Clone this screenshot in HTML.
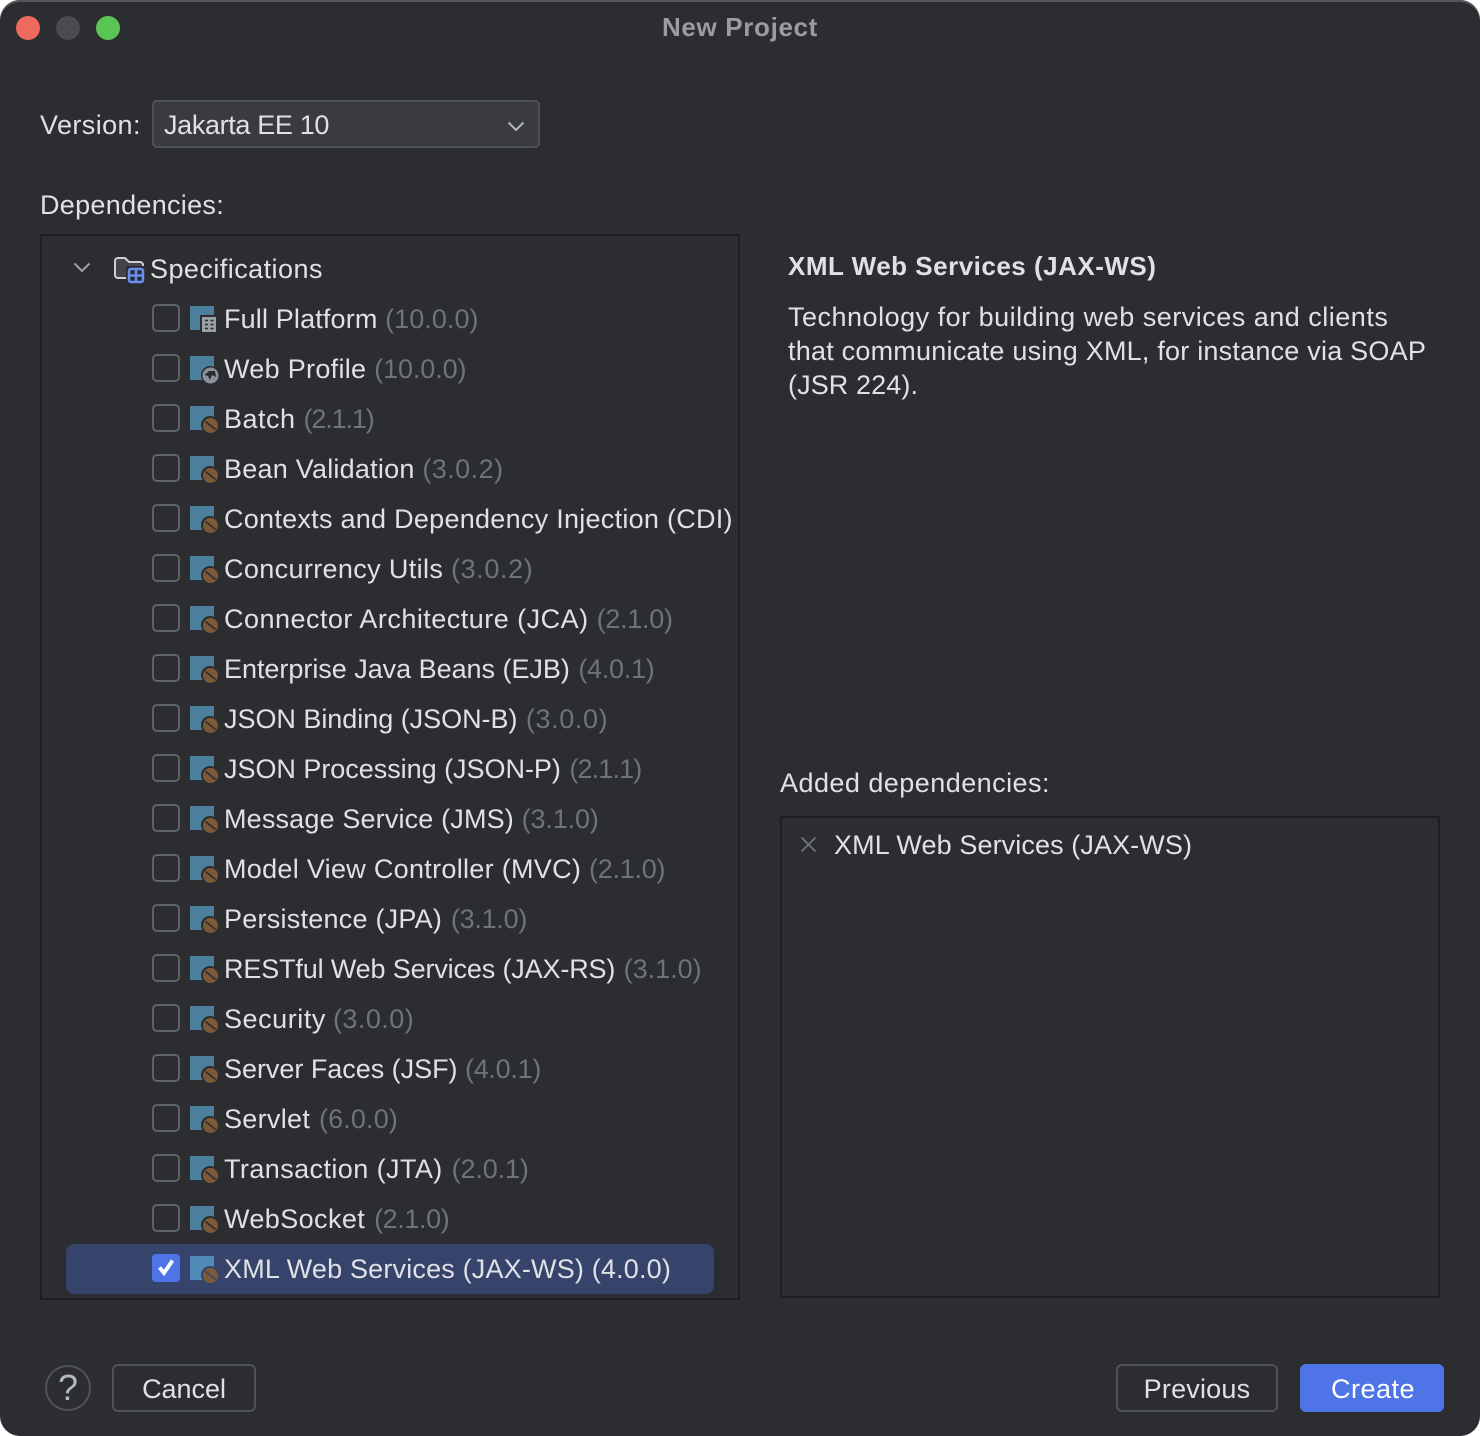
<!DOCTYPE html>
<html><head><meta charset="utf-8"><style>
html,body{margin:0;padding:0;background:#fff}
body{width:1480px;height:1436px;overflow:hidden;position:relative;font-family:"Liberation Sans",sans-serif}
#w{position:absolute;left:0;top:0;width:1480px;height:1436px;background:#2b2d30;border-radius:20px;box-shadow:inset 0 2px 0 #55565a;overflow:hidden;color:#dfe1e5;font-size:27px}
.t{position:absolute;white-space:nowrap;line-height:34px;letter-spacing:.3px}
.g{color:#6f737a}
.a{position:absolute}
.box{position:absolute;box-sizing:border-box;border:2px solid #1e1f22}
.cb{position:absolute;left:152px;width:28px;height:28px;box-sizing:border-box;border:2px solid #5f6268;border-radius:5px}
.i{position:absolute;left:190px;width:24px;height:24px;background:#4c7f9c}
.ov{position:absolute;left:201px;width:18px;height:18px}
.r{left:224px}
.btn{position:absolute;top:1364px;height:48px;box-sizing:border-box;border:2px solid #4e5157;border-radius:6px;text-align:center;line-height:46px;letter-spacing:.3px}
</style></head><body><div id="w">
<svg width="0" height="0" style="position:absolute"><defs>
<symbol id="bean" viewBox="0 0 18 18"><circle cx="9" cy="9" r="9" fill="#2b2d30"/><circle cx="9.500" cy="9.500" r="7.500" fill="#7d5a36"/><path d="M4.500 5.500L14.500 13.500" stroke="#2b2d30" stroke-width="1.600"/></symbol>
<symbol id="beans" viewBox="0 0 18 18"><circle cx="9" cy="9" r="9" fill="#36436b"/><circle cx="9.500" cy="9.500" r="7.500" fill="#7d5a36"/><path d="M4.500 5.500L14.500 13.500" stroke="#36436b" stroke-width="1.600"/></symbol>
</defs></svg>

<div class="a" style="left:16px;top:16px;width:24px;height:24px;border-radius:50%;background:#ee695e"></div>
<div class="a" style="left:56px;top:16px;width:24px;height:24px;border-radius:50%;background:#4a4b4e"></div>
<div class="a" style="left:96px;top:16px;width:24px;height:24px;border-radius:50%;background:#5ac455"></div>
<div class="t" style="left:0;width:1480px;text-align:center;top:10px;font-weight:bold;font-size:26px;color:#9a9ca1;letter-spacing:.65px">New Project</div>

<div class="t" style="left:40px;top:108px;letter-spacing:.42px">Version:</div>
<div class="a" style="left:152px;top:100px;width:388px;height:48px;box-sizing:border-box;background:#393b40;border:2px solid #4e5157;border-radius:5px"></div>
<div class="t" style="left:164px;top:108px;letter-spacing:-.35px">Jakarta EE 10</div>
<svg class="a" style="left:506px;top:120px" width="20" height="14" viewBox="0 0 20 14"><path d="M2.500 2.500L10 10L17.500 2.500" fill="none" stroke="#b4b8bf" stroke-width="2"/></svg>

<div class="t" style="left:40px;top:188px">Dependencies:</div>
<div class="box" style="left:40px;top:234px;width:700px;height:1066px"></div>

<svg class="a" style="left:72px;top:261px" width="20" height="14" viewBox="0 0 20 14"><path d="M2.500 2.500L10 10L17.500 2.500" fill="none" stroke="#9da0a8" stroke-width="2"/></svg>
<svg class="a" style="left:112px;top:254px" width="36" height="32" viewBox="0 0 36 32"><path d="M3 7a3 3 0 0 1 3-3h7l4 4h11a3 3 0 0 1 3 3v13H6a3 3 0 0 1-3-3z" fill="#43454a" stroke="#ced0d6" stroke-width="2"/><rect x="14" y="12" width="20" height="20" fill="#2b2d30"/><rect x="17" y="15" width="14" height="13" rx="2" fill="#2b2d30" stroke="#6b8fef" stroke-width="2.500"/><path d="M24 15v13M17 21.500h14" stroke="#6b8fef" stroke-width="2.500"/></svg>
<div class="t" style="left:150px;top:252px;letter-spacing:.45px">Specifications</div>

<div class="cb" style="top:304px"></div><div class="i" style="top:306px"></div>
<svg class="ov" style="left:200px;top:315px" viewBox="0 0 18 18"><rect width="18" height="18" fill="#2b2d30"/><rect x="2" y="2" width="14" height="15" fill="#9aa0a8"/><path d="M5 5.500h3M5 9.500h3M5 13.500h3M10.500 5.500h3M10.500 9.500h3M10.500 13.500h3" stroke="#2b2d30" stroke-width="1.600"/></svg>
<div class="t r" style="top:302px;letter-spacing:.15px">Full Platform <span class="g" style="letter-spacing:.05px">(10.0.0)</span></div>

<div class="cb" style="top:354px"></div><div class="i" style="top:356px"></div>
<svg class="ov" style="top:366px" viewBox="0 0 18 18"><circle cx="9" cy="9" r="9" fill="#2b2d30"/><circle cx="9.500" cy="9.500" r="8" fill="#8a929c"/><path d="M3.500 9L8 5L14 5L15 11L11 9L9 14L7 10z" fill="#2b2d30"/></svg>
<div class="t r" style="top:352px">Web Profile <span class="g" style="letter-spacing:-.1px">(10.0.0)</span></div>

<div class="cb" style="top:404px"></div><div class="i" style="top:406px"></div><svg class="ov" style="top:416px"><use href="#bean"/></svg>
<div class="t r" style="top:402px;letter-spacing:.5px">Batch <span class="g" style="letter-spacing:-1.15px">(2.1.1)</span></div>
<div class="cb" style="top:454px"></div><div class="i" style="top:456px"></div><svg class="ov" style="top:466px"><use href="#bean"/></svg>
<div class="t r" style="top:452px;letter-spacing:.23px">Bean Validation <span class="g" style="letter-spacing:.45px">(3.0.2)</span></div>
<div class="cb" style="top:504px"></div><div class="i" style="top:506px"></div><svg class="ov" style="top:516px"><use href="#bean"/></svg>
<div class="t r" style="top:502px;letter-spacing:.27px">Contexts and Dependency Injection (CDI)</div>
<div class="cb" style="top:554px"></div><div class="i" style="top:556px"></div><svg class="ov" style="top:566px"><use href="#bean"/></svg>
<div class="t r" style="top:552px;letter-spacing:.36px">Concurrency Utils <span class="g" style="letter-spacing:.6px">(3.0.2)</span></div>
<div class="cb" style="top:604px"></div><div class="i" style="top:606px"></div><svg class="ov" style="top:616px"><use href="#bean"/></svg>
<div class="t r" style="top:602px;letter-spacing:.48px">Connector Architecture (JCA) <span class="g" style="letter-spacing:-.27px">(2.1.0)</span></div>
<div class="cb" style="top:654px"></div><div class="i" style="top:656px"></div><svg class="ov" style="top:666px"><use href="#bean"/></svg>
<div class="t r" style="top:652px;letter-spacing:-.03px">Enterprise Java Beans (EJB) <span class="g" style="letter-spacing:-.27px;margin-left:1px">(4.0.1)</span></div>
<div class="cb" style="top:704px"></div><div class="i" style="top:706px"></div><svg class="ov" style="top:716px"><use href="#bean"/></svg>
<div class="t r" style="top:702px;letter-spacing:-.03px">JSON Binding (JSON-B) <span class="g" style="letter-spacing:.6px;margin-left:1px">(3.0.0)</span></div>
<div class="cb" style="top:754px"></div><div class="i" style="top:756px"></div><svg class="ov" style="top:766px"><use href="#bean"/></svg>
<div class="t r" style="top:752px;letter-spacing:-.03px">JSON Processing (JSON-P) <span class="g" style="letter-spacing:-.85px;margin-left:1px">(2.1.1)</span></div>
<div class="cb" style="top:804px"></div><div class="i" style="top:806px"></div><svg class="ov" style="top:816px"><use href="#bean"/></svg>
<div class="t r" style="top:802px;letter-spacing:.16px">Message Service (JMS) <span class="g" style="letter-spacing:-.13px">(3.1.0)</span></div>
<div class="cb" style="top:854px"></div><div class="i" style="top:856px"></div><svg class="ov" style="top:866px"><use href="#bean"/></svg>
<div class="t r" style="top:852px">Model View Controller (MVC) <span class="g" style="letter-spacing:-.27px">(2.1.0)</span></div>
<div class="cb" style="top:904px"></div><div class="i" style="top:906px"></div><svg class="ov" style="top:916px"><use href="#bean"/></svg>
<div class="t r" style="top:902px;letter-spacing:.24px">Persistence (JPA) <span class="g" style="letter-spacing:-.27px;margin-left:1px">(3.1.0)</span></div>
<div class="cb" style="top:954px"></div><div class="i" style="top:956px"></div><svg class="ov" style="top:966px"><use href="#bean"/></svg>
<div class="t r" style="top:952px;letter-spacing:-.15px">RESTful Web Services (JAX-RS) <span class="g" style="letter-spacing:0;margin-left:1px">(3.1.0)</span></div>
<div class="cb" style="top:1004px"></div><div class="i" style="top:1006px"></div><svg class="ov" style="top:1016px"><use href="#bean"/></svg>
<div class="t r" style="top:1002px;letter-spacing:.55px">Security <span class="g" style="letter-spacing:.45px;margin-left:-1px">(3.0.0)</span></div>
<div class="cb" style="top:1054px"></div><div class="i" style="top:1056px"></div><svg class="ov" style="top:1066px"><use href="#bean"/></svg>
<div class="t r" style="top:1052px;letter-spacing:-.03px">Server Faces (JSF) <span class="g" style="letter-spacing:-.27px">(4.0.1)</span></div>
<div class="cb" style="top:1104px"></div><div class="i" style="top:1106px"></div><svg class="ov" style="top:1116px"><use href="#bean"/></svg>
<div class="t r" style="top:1102px">Servlet <span class="g" style="letter-spacing:.15px;margin-left:1px">(6.0.0)</span></div>
<div class="cb" style="top:1154px"></div><div class="i" style="top:1156px"></div><svg class="ov" style="top:1166px"><use href="#bean"/></svg>
<div class="t r" style="top:1152px;letter-spacing:.42px">Transaction (JTA) <span class="g" style="letter-spacing:-.13px;margin-left:1px">(2.0.1)</span></div>
<div class="cb" style="top:1204px"></div><div class="i" style="top:1206px"></div><svg class="ov" style="top:1216px"><use href="#bean"/></svg>
<div class="t r" style="top:1202px;letter-spacing:.4px">WebSocket <span class="g" style="letter-spacing:-.4px;margin-left:1px">(2.1.0)</span></div>

<div class="a" style="left:66px;top:1244px;width:648px;height:50px;background:#36436b;border-radius:8px"></div>
<div class="a" style="left:152px;top:1254px;width:28px;height:28px;background:#4e74e8;border-radius:4px"></div>
<svg class="a" style="left:152px;top:1254px" width="28" height="28" viewBox="0 0 28 28"><path d="M7.500 13.500L12 19L20.500 6.500" fill="none" stroke="#fff" stroke-width="3.800"/></svg>
<div class="i" style="top:1256px;background:#5089b5"></div><svg class="ov" style="top:1266px"><use href="#beans"/></svg>
<div class="t r" style="top:1252px;letter-spacing:.18px">XML Web Services (JAX-WS) (4.0.0)</div>

<div class="t" style="left:788px;top:249px;font-weight:bold;font-size:26px;letter-spacing:.5px">XML Web Services (JAX-WS)</div>
<div class="t" style="left:788px;top:300px;letter-spacing:.5px">Technology for building web services and clients</div>
<div class="t" style="left:788px;top:334px;letter-spacing:.22px">that communicate using XML, for instance via SOAP</div>
<div class="t" style="left:788px;top:368px;letter-spacing:.1px">(JSR 224).</div>

<div class="t" style="left:780px;top:766px;letter-spacing:.46px">Added dependencies:</div>
<div class="box" style="left:780px;top:816px;width:660px;height:482px"></div>
<svg class="a" style="left:800px;top:836px" width="17" height="17" viewBox="0 0 17 17"><path d="M1.500 1.500L15.500 15.500M15.500 1.500L1.500 15.500" stroke="#6f737a" stroke-width="1.800"/></svg>
<div class="t" style="left:834px;top:828px;letter-spacing:.1px">XML Web Services (JAX-WS)</div>

<svg class="a" style="left:45px;top:1365px" width="46" height="46" viewBox="0 0 46 46"><circle cx="23" cy="23" r="22" fill="none" stroke="#4e5157" stroke-width="2"/><text x="23" y="35" text-anchor="middle" font-family="Liberation Sans" font-size="36" fill="#b4b8bf">?</text></svg>
<div class="btn" style="left:112px;width:144px;letter-spacing:-.03px">Cancel</div>
<div class="btn" style="left:1116px;width:162px;letter-spacing:.2px">Previous</div>
<div class="btn" style="left:1300px;width:144px;background:#4e74e8;border-color:#4e74e8;color:#fff;letter-spacing:.5px;padding-left:2px">Create</div>
</div></body></html>
